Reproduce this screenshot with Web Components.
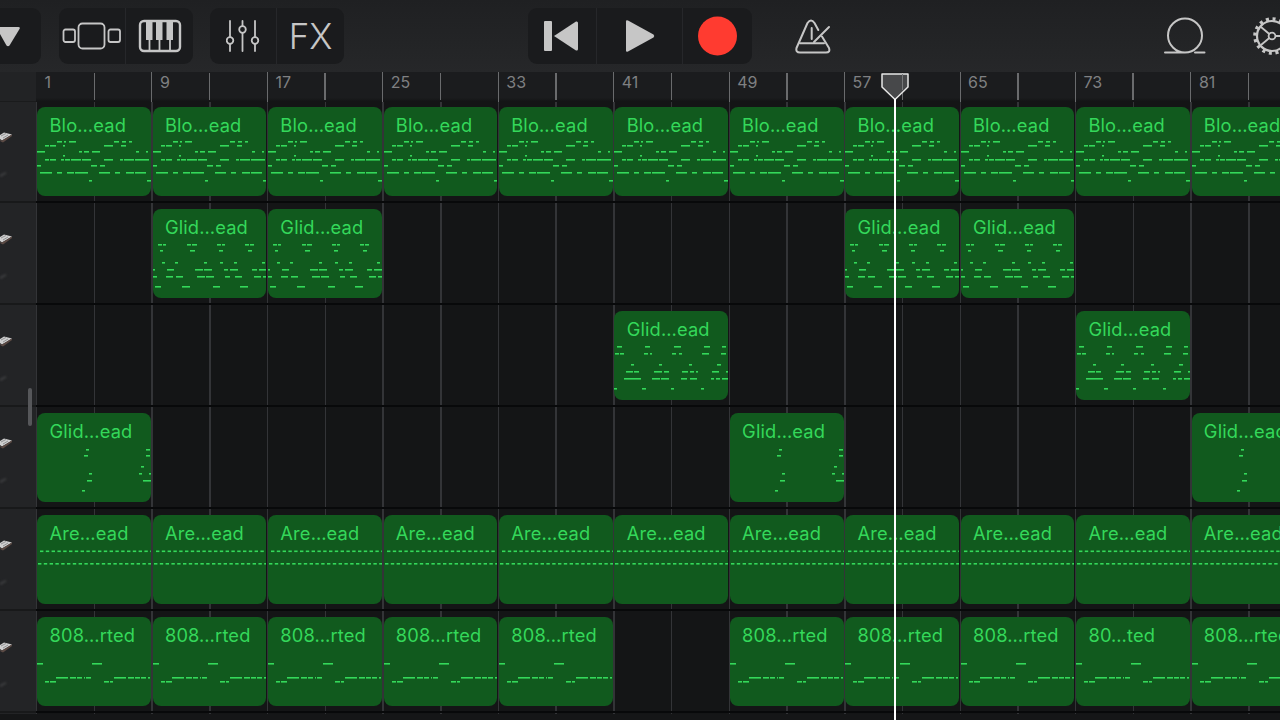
<!DOCTYPE html>
<html>
<head>
<meta charset="utf-8">
<style>
    html, body { margin: 0; padding: 0; background: #151617; overflow: hidden; }
    body { width: 1280px; height: 720px; font-family: "Inter", "Liberation Sans", sans-serif; }
    gb-app { width: 1280px; height: 720px; }
</style>
</head>
<body>
<gb-app>
    <gb-toolbar></gb-toolbar>
    <gb-ruler></gb-ruler>
    <gb-arrange>
        <gb-track><gb-region col="1" name="Blo…ead" notes="blo"></gb-region><gb-region col="2" name="Blo…ead" notes="blo"></gb-region><gb-region col="3" name="Blo…ead" notes="blo"></gb-region><gb-region col="4" name="Blo…ead" notes="blo"></gb-region><gb-region col="5" name="Blo…ead" notes="blo"></gb-region><gb-region col="6" name="Blo…ead" notes="blo"></gb-region><gb-region col="7" name="Blo…ead" notes="blo"></gb-region><gb-region col="8" name="Blo…ead" notes="blo"></gb-region><gb-region col="9" name="Blo…ead" notes="blo"></gb-region><gb-region col="10" name="Blo…ead" notes="blo"></gb-region><gb-region col="11" name="Blo…ead" notes="blo"></gb-region></gb-track>
        <gb-track><gb-region col="2" name="Glid…ead" notes="glidA"></gb-region><gb-region col="3" name="Glid…ead" notes="glidA"></gb-region><gb-region col="8" name="Glid…ead" notes="glidA"></gb-region><gb-region col="9" name="Glid…ead" notes="glidA"></gb-region></gb-track>
        <gb-track><gb-region col="6" name="Glid…ead" notes="glidB"></gb-region><gb-region col="10" name="Glid…ead" notes="glidB"></gb-region></gb-track>
        <gb-track><gb-region col="1" name="Glid…ead" notes="glidC"></gb-region><gb-region col="7" name="Glid…ead" notes="glidC"></gb-region><gb-region col="11" name="Glid…ead" notes="glidC"></gb-region></gb-track>
        <gb-track><gb-region col="1" name="Are…ead" notes="are"></gb-region><gb-region col="2" name="Are…ead" notes="are"></gb-region><gb-region col="3" name="Are…ead" notes="are"></gb-region><gb-region col="4" name="Are…ead" notes="are"></gb-region><gb-region col="5" name="Are…ead" notes="are"></gb-region><gb-region col="6" name="Are…ead" notes="are"></gb-region><gb-region col="7" name="Are…ead" notes="are"></gb-region><gb-region col="8" name="Are…ead" notes="are"></gb-region><gb-region col="9" name="Are…ead" notes="are"></gb-region><gb-region col="10" name="Are…ead" notes="are"></gb-region><gb-region col="11" name="Are…ead" notes="are"></gb-region></gb-track>
        <gb-track><gb-region col="1" name="808…rted" notes="kick"></gb-region><gb-region col="2" name="808…rted" notes="kick"></gb-region><gb-region col="3" name="808…rted" notes="kick"></gb-region><gb-region col="4" name="808…rted" notes="kick"></gb-region><gb-region col="5" name="808…rted" notes="kick"></gb-region><gb-region col="7" name="808…rted" notes="kick"></gb-region><gb-region col="8" name="808…rted" notes="kick"></gb-region><gb-region col="9" name="808…rted" notes="kick"></gb-region><gb-region col="10" name="80…ted" notes="kick"></gb-region><gb-region col="11" name="808…rted" notes="kick"></gb-region></gb-track>
    </gb-arrange>
    <gb-playhead></gb-playhead>
</gb-app>

<script>
// note rows: [y, x1, x2, x1, x2, ...] in region pixels
const PATTERNS = {
    blo: [
        [34, 20,25, 27,29, 32,39, 77,82, 85,89, 92,95],
        [38, 8,12, 13,19, 26,28, 67,76, 84,89],
        [44, 0,8, 42,45, 47,52, 55,63, 99,102, 109,111],
        [48, 26,28],
        [52, 8,12, 13,19, 24,27, 28,33, 34,44, 45,54, 67,76, 83,86, 87,97, 98,112],
        [58, 0,4, 54,60, 63,68],
        [65, 3,15, 20,25, 30,37, 38,51, 62,73, 78,83, 89,97, 98,109],
        [73, 52,55, 110,114]
    ],
    glidA: [
        [35, 5,9, 10,13, 34,38, 39,44, 64,68, 69,72, 92,96, 97,101],
        [41, 7,10, 37,42, 66,70, 95,99],
        [53, 9,12, 22,25, 51,54, 67,70, 81,84, 109,112],
        [60, 0,2, 14,21, 42,50, 51,59, 71,75, 77,85, 99,104, 106,115],
        [67, 0,4, 13,20, 23,30, 44,52, 53,61, 72,77, 82,89, 101,108, 110,115],
        [77, 2,8, 29,37, 60,67, 87,95]
    ],
    glidB: [
        [35, 3,8, 31,36, 60,67, 90,96, 108,112],
        [42, 1,5, 6,10, 30,34, 36,38, 58,62, 65,68, 88,95, 107,112],
        [53, 17,20, 45,48, 75,78, 103,107],
        [60, 12,19, 20,25, 40,48, 50,55, 68,74, 76,80, 82,84, 98,105, 112,114],
        [67, 10,27, 38,46, 47,55, 67,73, 76,83, 97,100, 102,106, 108,114],
        [77, 0,3, 28,32, 57,60, 87,90]
    ],
    glidC: [
        [36, 49,52, 109,113],
        [42, 47,51, 109,113],
        [53, 104,107],
        [60, 52,55, 102,105, 112,114],
        [67, 50,55, 106,114],
        [77, 45,48]
    ],
    kick: [
        [46, 0,6, 55,65],
        [60, 19,31, 33,39, 40,45, 47,48, 49,54, 77,89, 91,97, 98,103, 104,109, 111,113],
        [64, 8,12, 13,19, 67,72, 73,76]
    ]
};

// the area track is only two rows of even dashes
function areNotes() {
    const rows = [];
    for (const [y, start] of [[35.5, 3], [48, 1]]) {
        const row = [y];
        for (let x = start; x < 114; x += 5.8) {
            row.push(x, x + 3.4);
        }
        rows.push(row);
    }
    return rows;
}

function notesSvg(name) {
    const rows = name === 'are' ? areNotes() : PATTERNS[name];
    let rects = '';
    rows.forEach(row => {
        for (let i = 1; i < row.length; i += 2) {
            rects += `<rect x="${row[i]}" y="${row[0]}" width="${row[i + 1] - row[i]}" height="1.6"/>`;
        }
    });
    return `<svg width="114" height="89" viewBox="0 0 114 89">${rects}</svg>`;
}

class GbApp extends HTMLElement {
    constructor() {
        super();
        this.attachShadow({mode: 'open'});
    }
    connectedCallback() {
        this.shadowRoot.innerHTML = `
        <style>
            :host { display: flex; flex-direction: column; position: relative; overflow: hidden; }
        </style>
        <slot></slot>`;
    }
}

class GbToolbar extends HTMLElement {
    constructor() {
        super();
        this.attachShadow({mode: 'open'});
    }
    connectedCallback() {
        this.shadowRoot.innerHTML = `
        <style>
            :host {
                display: flex;
                flex: none;
                height: 72px;
                padding: 8px 0;
                box-sizing: border-box;
                background: linear-gradient(#1f2022, #262729);
                color: #c6c6c6;
            }
            .group {
                display: flex;
                height: 56px;
                background: #1a1b1d;
                border-radius: 9px;
                flex: none;
                overflow: hidden;
            }
            .group > div {
                display: flex;
                align-items: center;
                justify-content: center;
                box-sizing: border-box;
            }
            .group > div + div { border-left: 1px solid #26272a; }
            .view { width: 42px; margin-left: -1px; border-radius: 0 9px 9px 0; }
            .tools { margin-left: 18px; }
            .mix { margin-left: 17px; }
            .transport { margin-left: 184px; }
            .fx { font: 300 35px "Inter", "Liberation Sans", sans-serif; color: #c6c6c6; }
            .metro { margin-left: 43px; align-self: center; }
            .loop { margin-left: 333px; align-self: center; }
            .gear { margin-left: 46px; align-self: center; flex: none; }
            svg { display: block; flex: none; }
        </style>
        <div class="group view">
            <div style="width:100%;justify-content:flex-start">
                <svg width="22" height="22" viewBox="0 0 22 22"><path d="M-3 2H19.5Q21.5 2 20.5 4L10.5 20.5Q9 22 7.5 20.5Z" fill="#c6c6c6"/></svg>
            </div>
        </div>
        <div class="group tools">
            <div style="width:66px">
                <svg width="60" height="30" viewBox="0 0 60 30" fill="none" stroke="#c6c6c6" stroke-width="1.8"><rect x="1.5" y="8.5" width="11.5" height="12.5" rx="2"/><rect x="16.5" y="2.5" width="26" height="25" rx="4"/><rect x="46.5" y="8.5" width="11.5" height="12.5" rx="2"/></svg>
            </div>
            <div style="width:68px">
                <svg width="44" height="34" viewBox="0 0 44 34"><rect x="2" y="2" width="40" height="30" rx="4" fill="none" stroke="#c6c6c6" stroke-width="2.4"/><path d="M8 2h6.5v19h-6.5zM18 2h6.5v19h-6.5zM28.5 2h6.5v19h-6.5z" fill="#c6c6c6"/><path d="M11.5 21v11M21.5 21v11M32 21v11" stroke="#c6c6c6" stroke-width="1.8"/></svg>
            </div>
        </div>
        <div class="group mix">
            <div style="width:66px">
                <svg width="34" height="34" viewBox="0 0 34 34" fill="none" stroke="#c6c6c6" stroke-width="1.8" stroke-linecap="round"><path d="M4 2v16M4 25v7M16.5 2v5M16.5 14v18M29 2v16M29 25v7"/><circle cx="4" cy="21.5" r="3.3"/><circle cx="16.5" cy="10.5" r="3.3"/><circle cx="29" cy="21.5" r="3.3"/></svg>
            </div>
            <div class="fx" style="width:68px">FX</div>
        </div>
        <div class="group transport">
            <div style="width:68px">
                <svg width="36" height="32" viewBox="0 0 36 32" fill="#c6c6c6"><rect x="0" y="1" width="8" height="30" rx="1"/><path d="M10 16L32 1.5Q34 1 34 3V29Q34 31 32 30.5Z"/></svg>
            </div>
            <div style="width:86px">
                <svg width="30" height="34" viewBox="0 0 30 34" fill="#c6c6c6"><path d="M1 2.5Q1 .5 3 1.5L28.5 15.5Q30 17 28.5 18.5L3 32.5Q1 33.5 1 31.5Z"/></svg>
            </div>
            <div style="width:70px">
                <svg width="40" height="40" viewBox="0 0 40 40"><circle cx="19.5" cy="20" r="19.5" fill="#ff3b30"/></svg>
            </div>
        </div>
        <svg class="metro" width="36" height="36" viewBox="0 0 36 36" fill="none" stroke="#c6c6c6" stroke-width="2" stroke-linejoin="round" stroke-linecap="round">
            <path d="M23.3 12L19.5 5Q16 0 12.5 5L1.5 30Q.5 34.5 5 34.5H31Q35.5 34.5 34 30L27 18.5"/>
            <path d="M5 25.3H29"/>
            <path d="M16.7 10V21M19 24L34 9"/>
        </svg>
        <svg class="loop" width="42" height="38" viewBox="0 0 42 38" fill="none" stroke="#c6c6c6" stroke-width="2" stroke-linecap="round">
            <path d="M1 35.5H21A17 17 0 1 1 21 1.5A17 17 0 1 1 21 35.5M31 35.5H40.5"/>
        </svg>
        <svg class="gear" width="40" height="40" viewBox="0 0 40 40" fill="none" stroke="#c6c6c6">
            <circle cx="20" cy="20" r="15" stroke-width="2.2"/>
            <circle cx="20" cy="20" r="17" stroke-width="3.6" stroke-dasharray="3 3.68"/>
            <circle cx="20" cy="20" r="3.4" stroke-width="1.8"/>
            <path d="M17.3 18L9 11M17.3 22L9 29M23.4 20H35" stroke-width="1.8"/>
        </svg>`;
    }
}

class GbRuler extends HTMLElement {
    constructor() {
        super();
        this.attachShadow({mode: 'open'});
    }
    connectedCallback() {
        let bars = '';
        for (let i = 0; i < 11; i++) {
            bars += `<div class="bar"><span>${i * 8 + 1}</span><i></i></div>`;
        }
        this.shadowRoot.innerHTML = `
        <style>
            :host {
                display: flex;
                flex: none;
                height: 30px;
                background: #222325;
            }
            .rail { width: 36px; flex: none; border-bottom: 1px solid #1a1b1c; box-sizing: border-box; }
            .bars {
                display: grid;
                grid-template-columns: repeat(11, 115.45px);
                background: linear-gradient(#1b1c1e 85%, #131415);
                flex: none;
            }
            .bar {
                box-sizing: border-box;
                display: flex;
                align-items: flex-start;
                padding: 2px 0 0 7.5px;
                border-left: 1.5px solid #6a6b6d;
                position: relative;
                height: 30px;
                font: 16px/16px "Inter", "Liberation Sans", sans-serif;
                color: #7f8082;
            }
            .bar:first-child { border-left-color: transparent; }
            .bar i {
                position: absolute;
                left: 56.5px;
                top: 1px;
                bottom: 2px;
                width: 1.5px;
                background: #6a6b6d;
            }
        </style>
        <div class="rail"></div>
        <div class="bars">${bars}</div>`;
    }
}

class GbArrange extends HTMLElement {
    constructor() {
        super();
        this.attachShadow({mode: 'open'});
    }
    connectedCallback() {
        this.shadowRoot.innerHTML = `
        <style>
            :host { display: block; flex: 1; overflow: hidden; position: relative; }
            .scroll {
                position: absolute;
                left: 28px;
                top: 286px;
                width: 4px;
                height: 38px;
                background: #56575a;
                border-radius: 2px;
            }
        </style>
        <slot></slot>
        <div class="scroll"></div>`;
    }
}

class GbTrack extends HTMLElement {
    constructor() {
        super();
        this.attachShadow({mode: 'open'});
    }
    connectedCallback() {
        this.shadowRoot.innerHTML = `
        <style>
            :host {
                display: flex;
                height: 102px;
                box-sizing: border-box;
            }
            .head {
                width: 36px;
                flex: none;
                background: linear-gradient(transparent 99px, #18191a 99px 101px, transparent 101px), #232426;
                padding-top: 30px;
                box-sizing: border-box;
            }
            .head svg { display: block; }
            .head .smudge { margin-top: 26px; filter: blur(1px); }
            .lane {
                flex: none;
                width: 1270px;
                height: 102px;
                display: grid;
                grid-template-columns: repeat(11, 115.45px);
                align-items: start;
                padding-top: 5px;
                box-sizing: border-box;
                background:
                    linear-gradient(transparent 99px, #08090a 99px 101px, transparent 101px),
                    repeating-linear-gradient(90deg, #333437 0 1.5px, transparent 1.5px 57.72px),
                    #141516;
            }
        </style>
        <div class="head">
            <svg width="13" height="12" viewBox="0 0 13 12">
                <path d="M-3 5L4 .5L12 2.5L2 8.5Z" fill="#cfcfcf"/>
                <path d="M1 4L6 1.5M3 6L8 3" stroke="#77787a" stroke-width=".7"/>
                <path d="M2 8.5L12 2.5V4L3 10.5L-2 8Z" fill="#5b4a44"/>
            </svg>
            <svg class="smudge" width="8" height="8" viewBox="0 0 8 8"><path d="M-2 6L5 2L7 3L1 7Z" fill="#3c3d3f"/></svg>
        </div>
        <div class="lane"><slot></slot></div>`;
    }
}

class GbRegion extends HTMLElement {
    constructor() {
        super();
        this.attachShadow({mode: 'open'});
    }
    connectedCallback() {
        this.style.gridColumn = this.getAttribute('col');
        this.shadowRoot.innerHTML = `
        <style>
            :host {
                display: block;
                position: relative;
                height: 89px;
                margin-left: 1.2px;
                width: 113.7px;
                box-sizing: border-box;
                background: #115a1e;
                border-radius: 8px;
                overflow: hidden;
                color: #34d85a;
            }
            .name {
                padding: 8px 0 0 12.3px;
                font: 18.3px/20px "Inter", "Liberation Sans", sans-serif;
                letter-spacing: .15px;
                white-space: nowrap;
            }
            svg { position: absolute; left: 0; top: 0; fill: #34d85a; }
        </style>
        <div class="name">${this.getAttribute('name')}</div>
        ${notesSvg(this.getAttribute('notes'))}`;
    }
}

class GbPlayhead extends HTMLElement {
    constructor() {
        super();
        this.attachShadow({mode: 'open'});
    }
    connectedCallback() {
        this.shadowRoot.innerHTML = `
        <style>
            :host {
                display: block;
                position: absolute;
                left: 881px;
                top: 73px;
                width: 28px;
                height: 647px;
            }
            .line { position: absolute; left: 13px; top: 26px; bottom: 0; width: 2px; background: #fff; }
            svg { position: absolute; left: 0; top: 0; }
        </style>
        <svg width="28" height="28" viewBox="0 0 28 28"><path d="M1 1H27V14L14 26.5L1 14Z" fill="#47484a" stroke="#e6e6e6" stroke-width="1.5" stroke-linejoin="round"/><path d="M21.5 1V17" stroke="#77787a" stroke-width="1"/></svg>
        <div class="line"></div>`;
    }
}

customElements.define('gb-app', GbApp);
customElements.define('gb-toolbar', GbToolbar);
customElements.define('gb-ruler', GbRuler);
customElements.define('gb-arrange', GbArrange);
customElements.define('gb-track', GbTrack);
customElements.define('gb-region', GbRegion);
customElements.define('gb-playhead', GbPlayhead);
</script>
</body>
</html>
